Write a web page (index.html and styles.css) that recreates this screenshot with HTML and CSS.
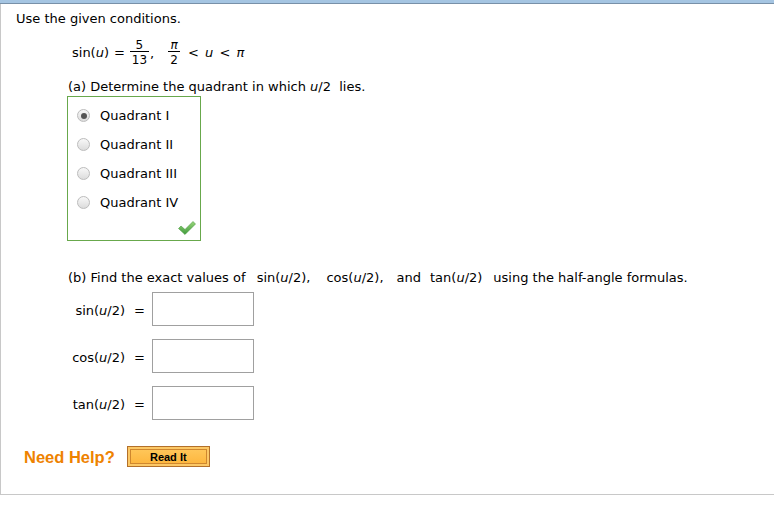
FILE: index.html
```html
<!DOCTYPE html>
<html>
<head>
<meta charset="utf-8">
<link rel="stylesheet" href="styles.css">
</head>
<body>
<div class="topbar"></div>
<div class="panel">
  <p class="intro">Use the given conditions.</p>
  <div class="given">
    <span class="m">sin(<i>u</i>)</span><span class="eq">=</span>
    <span class="frac f1"><span class="num">5</span><span class="den">13</span></span><span class="comma">,</span>
    <span class="frac f2"><span class="num"><i>π</i></span><span class="den">2</span></span>
    <span class="m rel">&lt; <i>u</i> &lt; <i>π</i></span>
  </div>
  <p class="part">(a) Determine the quadrant in which <i>u</i>/2&nbsp; lies.</p>
  <div class="choices">
    <div class="choice"><span class="radio checked"></span>Quadrant I</div>
    <div class="choice"><span class="radio"></span>Quadrant II</div>
    <div class="choice"><span class="radio"></span>Quadrant III</div>
    <div class="choice"><span class="radio"></span>Quadrant IV</div>
    <div class="mark">
      <svg width="18" height="14" viewBox="0 0 18 14">
        <defs>
          <linearGradient id="g" x1="0" y1="0" x2="0" y2="1">
            <stop offset="0" stop-color="#9ad67a"/>
            <stop offset="1" stop-color="#3f9a3c"/>
          </linearGradient>
        </defs>
        <polygon points="0.5,7.5 3,5 7,8.5 15,0.5 17.5,3 7,13.5" fill="url(#g)" stroke="#4a9a40" stroke-width="0.6" stroke-linejoin="round"/>
      </svg>
    </div>
  </div>
  <p class="part partb">(b) Find the exact values of <span class="mx s1">sin(<i>u</i>/2),</span><span class="mx s2">cos(<i>u</i>/2),</span><span class="mx s3">and</span><span class="mx s4">tan(<i>u</i>/2)</span><span class="mx s5">using the half-angle formulas.</span></p>
  <div class="answers">
    <div class="row"><span class="lbl">sin(<i>u</i>/2)<span class="eq2">=</span></span><span class="box"></span></div>
    <div class="row"><span class="lbl">cos(<i>u</i>/2)<span class="eq2">=</span></span><span class="box"></span></div>
    <div class="row"><span class="lbl">tan(<i>u</i>/2)<span class="eq2">=</span></span><span class="box"></span></div>
  </div>
  <div class="help"><span class="need">Need Help?</span><span class="btn">Read It</span></div>
</div>
</body>
</html>
```
FILE: styles.css
```css
html, body {
  margin: 0;
  padding: 0;
  background: #fff;
}
body {
  font-family: "DejaVu Sans", Verdana, sans-serif;
  font-size: 13px;
  line-height: 16px;
  color: #000;
  overflow: hidden;
}
i {
  font-style: italic;
}
.topbar {
  height: 3px;
  background: #a5c5e2;
  border-bottom: 1px solid #7890a8;
}
.panel {
  box-sizing: border-box;
  height: 491px;
  border-left: 1px solid #c8c8c8;
  border-bottom: 1px solid #c8c8c8;
  padding: 7px 0 0 15px;
}
.intro {
  margin: 0;
}
.given {
  display: flex;
  align-items: center;
  margin: 12px 0 0 56px;
  height: 28px;
}
.eq {
  margin-left: 5px;
}
.frac {
  display: inline-flex;
  flex-direction: column;
  align-items: center;
  font-size: 12px;
  line-height: 12px;
  margin-left: 5px;
  margin-top: -2px;
}
.frac .num {
  padding: 0 2px;
  border-bottom: 1px solid #000;
  align-self: stretch;
  text-align: center;
}
.frac .den {
  margin-top: 2px;
  padding: 0 2px;
}
.f1 {
  width: 19px;
}
.f2 {
  width: 12px;
  margin-left: 14px;
}
.comma {
  margin-top: 2px;
  margin-left: 1px;
}
.rel {
  margin-left: 8px;
  word-spacing: 2px;
}
.part {
  margin: 12px 0 0 52px;
}
.choices {
  box-sizing: border-box;
  width: 134px;
  height: 145px;
  margin: 1px 0 0 51px;
  border: 1px solid #68a84c;
  padding: 4px 0 0 9px;
}
.choice {
  display: flex;
  align-items: center;
  height: 29px;
}
.radio {
  box-sizing: border-box;
  width: 13px;
  height: 13px;
  border-radius: 50%;
  border: 1px solid #bcbcbc;
  background: linear-gradient(#f8f8f8, #dcdcdc);
  margin-right: 10px;
  display: flex;
  align-items: center;
  justify-content: center;
}
.radio.checked::after {
  content: "";
  width: 6px;
  height: 6px;
  border-radius: 50%;
  background: #555;
}
.mark {
  display: flex;
  justify-content: flex-end;
  padding: 4px 4px 0 0;
}
.partb {
  margin-top: 29px;
}
.mx {
  margin-left: 7px;
}
.s2 {
  margin-left: 16px;
}
.s3 {
  margin-left: 13px;
}
.s4 {
  margin-left: 9px;
}
.s5 {
  margin-left: 11px;
}
.answers {
  display: flex;
  flex-direction: column;
  gap: 13px;
  margin-top: 6px;
}
.row {
  display: flex;
  align-items: center;
}
.lbl {
  width: 129px;
  text-align: right;
  padding-top: 3px;
}
.eq2 {
  margin-left: 9px;
}
.box {
  box-sizing: border-box;
  width: 102px;
  height: 34px;
  border: 1px solid #a0a0a0;
  margin-left: 7px;
}
.help {
  display: flex;
  align-items: center;
  margin: 26px 0 0 8px;
}
.need {
  font-family: "Liberation Sans", Arial, sans-serif;
  font-weight: bold;
  font-size: 16.5px;
  color: #ee8200;
}
.btn {
  box-sizing: border-box;
  display: inline-flex;
  align-items: center;
  justify-content: center;
  width: 83px;
  height: 21px;
  margin-left: 12px;
  border: 1px solid #b3702a;
  background: linear-gradient(#ffc95e, #fdb43a);
  box-shadow: inset 0 0 0 2px #fcc866, inset 0 0 0 3px #cf872e;
  font-family: "Liberation Sans", Arial, sans-serif;
  font-weight: bold;
  font-size: 11px;
  color: #000;
}
```
